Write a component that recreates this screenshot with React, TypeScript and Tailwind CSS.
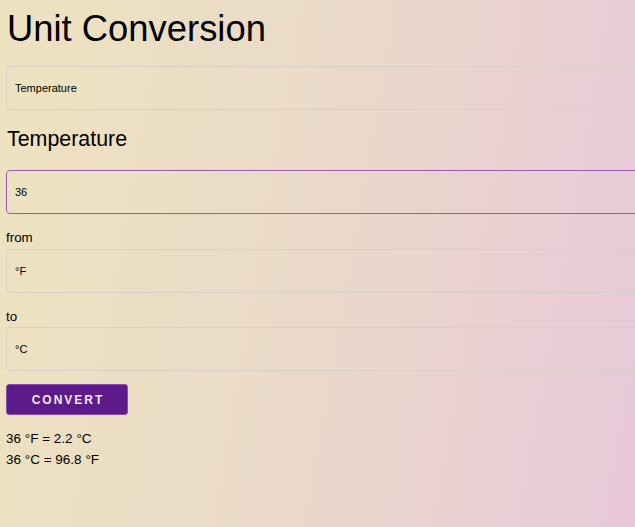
import { useState } from "react"

const UNITS = ["°F", "°C", "K"]

function convert(v: number, from: string, to: string) {
  const c = from === "°F" ? ((v - 32) * 5) / 9 : from === "K" ? v - 273.15 : v
  const out = to === "°F" ? (c * 9) / 5 + 32 : to === "K" ? c + 273.15 : c
  return Math.round(out * 10) / 10
}

export default function App() {
  const [value, setValue] = useState("36")
  const [from, setFrom] = useState("°F")
  const [to, setTo] = useState("°C")
  const n = Number(value)

  return (
    <div className="min-h-screen w-full overflow-hidden bg-[linear-gradient(100deg,#ede3bf_0%,#ead9c9_50%,#e8c8da_100%)] px-[6px] font-['Liberation_Sans',Arial,sans-serif] text-black">
      <h1 className="mt-[8px] pl-[1px] text-[36.4px] leading-[41px] font-normal">Unit Conversion</h1>

      {/* Category */}
      <select
        defaultValue="Temperature"
        className="mt-[17px] block h-[44px] w-[660px] appearance-none rounded-[4px] border border-[#d6d0c6] bg-transparent pl-[8px] text-[11px] outline-none"
      >
        <option>Temperature</option>
        <option>Length</option>
        <option>Weight</option>
      </select>

      <h2 className="mt-[17px] pl-[1px] text-[21.4px] leading-[24px] font-normal">Temperature</h2>

      <input
        value={value}
        onChange={(e) => setValue(e.target.value)}
        className="mt-[19px] block h-[44px] w-[660px] rounded-[4px] border border-[#9b59b6] bg-transparent pl-[8px] text-[11px] outline-none"
      />

      <label className="mt-[16px] block text-[13.33px] leading-[15px]">from</label>
      <select
        value={from}
        onChange={(e) => setFrom(e.target.value)}
        className="mt-[4px] block h-[44px] w-[660px] appearance-none rounded-[4px] border border-[#d6d0c6] bg-transparent pl-[8px] text-[11px] outline-none"
      >
        {UNITS.map((u) => (
          <option key={u}>{u}</option>
        ))}
      </select>

      <label className="mt-[16px] block text-[13.33px] leading-[15px]">to</label>
      <select
        value={to}
        onChange={(e) => setTo(e.target.value)}
        className="mt-[3px] block h-[44px] w-[660px] appearance-none rounded-[4px] border border-[#d6d0c6] bg-transparent pl-[8px] text-[11px] outline-none"
      >
        {UNITS.map((u) => (
          <option key={u}>{u}</option>
        ))}
      </select>

      <button className="mt-[13px] flex h-[31px] w-[122px] items-center justify-center rounded-[3px] border border-[#8a4cb0] bg-[#5d1a89] pl-[2px] text-[12px] font-bold tracking-[2px] text-[#f4e8f6]">
        CONVERT
      </button>

      <div className="mt-[13px] text-[13.5px] leading-[21px]">
        <div>
          {value} {from} = {convert(n, from, to)} {to}
        </div>
        <div>
          {value} {to} = {convert(n, to, from)} {from}
        </div>
      </div>
    </div>
  )
}
